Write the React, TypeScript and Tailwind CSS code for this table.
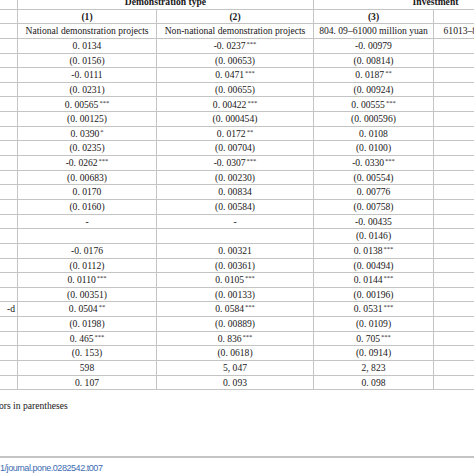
import React from "react";

// Regression table cropped from a journal figure: rows of coefficients with
// standard errors underneath, split by demonstration type and investment size.
type Cell = { v: string; s?: string };

const c = (v: string, s?: string): Cell => ({ v, s });

const rows: [Cell, Cell, Cell][] = [
  [c("0. 0134"), c("-0. 0237", "***"), c("-0. 00979")],
  [c("(0. 0156)"), c("(0. 00653)"), c("(0. 00814)")],
  [c("-0. 0111"), c("0. 0471", "***"), c("0. 0187", "**")],
  [c("(0. 0231)"), c("(0. 00655)"), c("(0. 00924)")],
  [c("0. 00565", "***"), c("0. 00422", "***"), c("0. 00555", "***")],
  [c("(0. 00125)"), c("(0. 000454)"), c("(0. 000596)")],
  [c("0. 0390", "*"), c("0. 0172", "**"), c("0. 0108")],
  [c("(0. 0235)"), c("(0. 00704)"), c("(0. 0100)")],
  [c("-0. 0262", "***"), c("-0. 0307", "***"), c("-0. 0330", "***")],
  [c("(0. 00683)"), c("(0. 00230)"), c("(0. 00554)")],
  [c("0. 0170"), c("0. 00834"), c("0. 00776")],
  [c("(0. 0160)"), c("(0. 00584)"), c("(0. 00758)")],
  [c("-"), c("-"), c("-0. 00435")],
  [c(""), c(""), c("(0. 0146)")],
  [c("-0. 0176"), c("0. 00321"), c("0. 0138", "***")],
  [c("(0. 0112)"), c("(0. 00361)"), c("(0. 00494)")],
  [c("0. 0110", "***"), c("0. 0105", "***"), c("0. 0144", "***")],
  [c("(0. 00351)"), c("(0. 00133)"), c("(0. 00196)")],
  [c("0. 0504", "**"), c("0. 0584", "***"), c("0. 0531", "***")],
  [c("(0. 0198)"), c("(0. 00889)"), c("(0. 0109)")],
  [c("0. 465", "***"), c("0. 836", "***"), c("0. 705", "***")],
  [c("(0. 153)"), c("(0. 0618)"), c("(0. 0914)")],
  [c("598"), c("5, 047"), c("2, 823")],
  [c("0. 107"), c("0. 093"), c("0. 098")],
];

const row = "grid grid-cols-[18px_139px_157px_120px_124px] h-[14.65px]";
const cell =
  "flex items-center justify-center border-r border-b border-[#c4c4c4] whitespace-nowrap overflow-visible";

function Val({ cell: x }: { cell: Cell }) {
  return (
    <span>
      {x.v}
      {x.s && (
        <span className="relative -top-[3px] ml-[1px] text-[6.5px] leading-none">
          {x.s}
        </span>
      )}
    </span>
  );
}

export default function App() {
  return (
    <div
      className="w-[474px] h-[474px] overflow-hidden bg-white text-[#1a1718] text-[9.6px] leading-none"
      style={{ fontFamily: '"Liberation Serif", "Times New Roman", serif' }}
    >
      <div className="w-[558px] -mt-[5px]">
        <div className={row}>
          <div className={cell} />
          <div className={`${cell} col-span-2 font-bold`}>Demonstration type</div>
          <div className={`${cell} col-span-2 font-bold`}>Investment</div>
        </div>
        <div className={row}>
          <div className={cell} />
          <div className={`${cell} font-bold`}>(1)</div>
          <div className={`${cell} font-bold`}>(2)</div>
          <div className={`${cell} font-bold`}>(3)</div>
          <div className={`${cell} font-bold`}>(4)</div>
        </div>
        <div className={row}>
          <div className={cell} />
          <div className={cell}>National demonstration projects</div>
          <div className={cell}>Non-national demonstration projects</div>
          <div className={cell}>804. 09–61000 million yuan</div>
          <div className={cell}>61013–83000 million yuan</div>
        </div>
        {rows.map((r, i) => (
          <div key={i} className={row}>
            <div className={`${cell} !justify-end pr-[2px]`}>{i === 18 ? "-d" : ""}</div>
            {r.map((x, j) => (
              <div key={j} className={cell}>
                <Val cell={x} />
              </div>
            ))}
            <div className={cell} />
          </div>
        ))}
      </div>

      <div className="mt-[8px] pb-[44px] border-b-[2px] border-[#c4c4c4]">
        <div className="h-[14px] flex items-center -ml-[1px]">ors in parentheses</div>
      </div>
      <div
        className="mt-[4px] text-[9px] tracking-[-0.45px] text-[#3d6bb3] leading-[12px]"
        style={{ fontFamily: '"Liberation Sans", Arial, sans-serif' }}
      >
        1/journal.pone.0282542.t007
      </div>
    </div>
  );
}
